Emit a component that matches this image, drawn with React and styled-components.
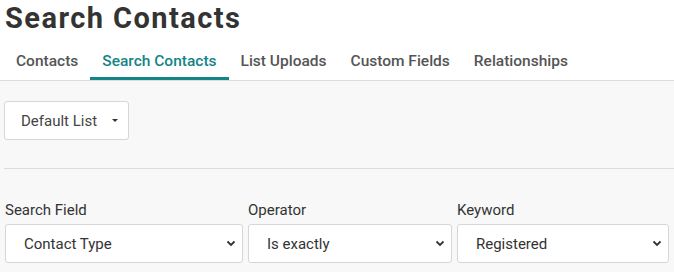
import React from "react";
import styled, { createGlobalStyle } from "styled-components";

const GlobalStyle = createGlobalStyle`
  body {
    margin: 0;
    background: #f8f8f8;
    font-family: Roboto, "Liberation Sans", sans-serif;
    color: #333;
  }
`;

const Header = styled.div`
  background: #fff;
  padding-top: 1px;
`;

const Title = styled.h1`
  margin: 0;
  padding-left: 5px;
  font-size: 29px;
  line-height: 34px;
  font-weight: 700;
  letter-spacing: 1.45px;
  color: #333;
`;

const TabBar = styled.div`
  display: flex;
  padding-left: 4px;
  border-bottom: 1px solid #dcdcdc;
`;

const Tab = styled.div`
  padding: 16px 12px 6px;
  font-size: 15.5px;
  line-height: 20px;
  font-weight: 500;
  color: ${(p) => (p.active ? "#138585" : "#555")};
  border-bottom: 3px solid ${(p) => (p.active ? "#138585" : "transparent")};
`;

const Body = styled.div`
  padding: 20px 0 0 4px;
`;

const DropButton = styled.div`
  display: inline-flex;
  align-items: center;
  gap: 15px;
  box-sizing: border-box;
  width: 125px;
  height: 39px;
  padding-left: 16px;
  background: #fff;
  border: 1.5px solid #d6d6d6;
  border-radius: 3px;
  font-size: 15px;
  color: #444;
`;

const Caret = styled.span`
  width: 0;
  height: 0;
  border-left: 3.5px solid transparent;
  border-right: 3.5px solid transparent;
  border-top: 3.5px solid #333;
`;

const Rule = styled.div`
  margin-top: 28px;
  border-top: 1.5px solid #dcdcdc;
`;

const Filters = styled.div`
  display: grid;
  grid-template-columns: 238px 204px 212px;
  gap: 5px;
  margin-top: 32px;
  padding-left: 1px;
`;

const Field = styled.div`
  display: flex;
  flex-direction: column;
  gap: 5px;
`;

const Label = styled.div`
  font-size: 15px;
  line-height: 18px;
  color: #333;
`;

const SelectBox = styled.div`
  display: flex;
  align-items: center;
  justify-content: space-between;
  box-sizing: border-box;
  height: 39px;
  padding: 0 6px 0 18px;
  background: #fff;
  border: 1.5px solid #d6d6d6;
  border-radius: 3px;
  font-size: 15px;
  color: #333;
`;

const Chevron = () => (
  <svg width="10" height="7" viewBox="0 0 10 7">
    <path d="M1.5 1.5 L5 5 L8.5 1.5" fill="none" stroke="#333" strokeWidth="1.8" />
  </svg>
);

const tabs = ["Contacts", "Search Contacts", "List Uploads", "Custom Fields", "Relationships"];

const filters = [
  { label: "Search Field", value: "Contact Type" },
  { label: "Operator", value: "Is exactly" },
  { label: "Keyword", value: "Registered" },
];

export default function App() {
  return (
    <>
      <GlobalStyle />
      <Header>
        <Title>Search Contacts</Title>
        <TabBar>
          {tabs.map((t) => (
            <Tab key={t} active={t === "Search Contacts"}>
              {t}
            </Tab>
          ))}
        </TabBar>
      </Header>
      <Body>
        <DropButton>
          Default List <Caret />
        </DropButton>
        <Rule />
        <Filters>
          {filters.map((f) => (
            <Field key={f.label}>
              <Label>{f.label}</Label>
              <SelectBox>
                {f.value}
                <Chevron />
              </SelectBox>
            </Field>
          ))}
        </Filters>
      </Body>
    </>
  );
}
